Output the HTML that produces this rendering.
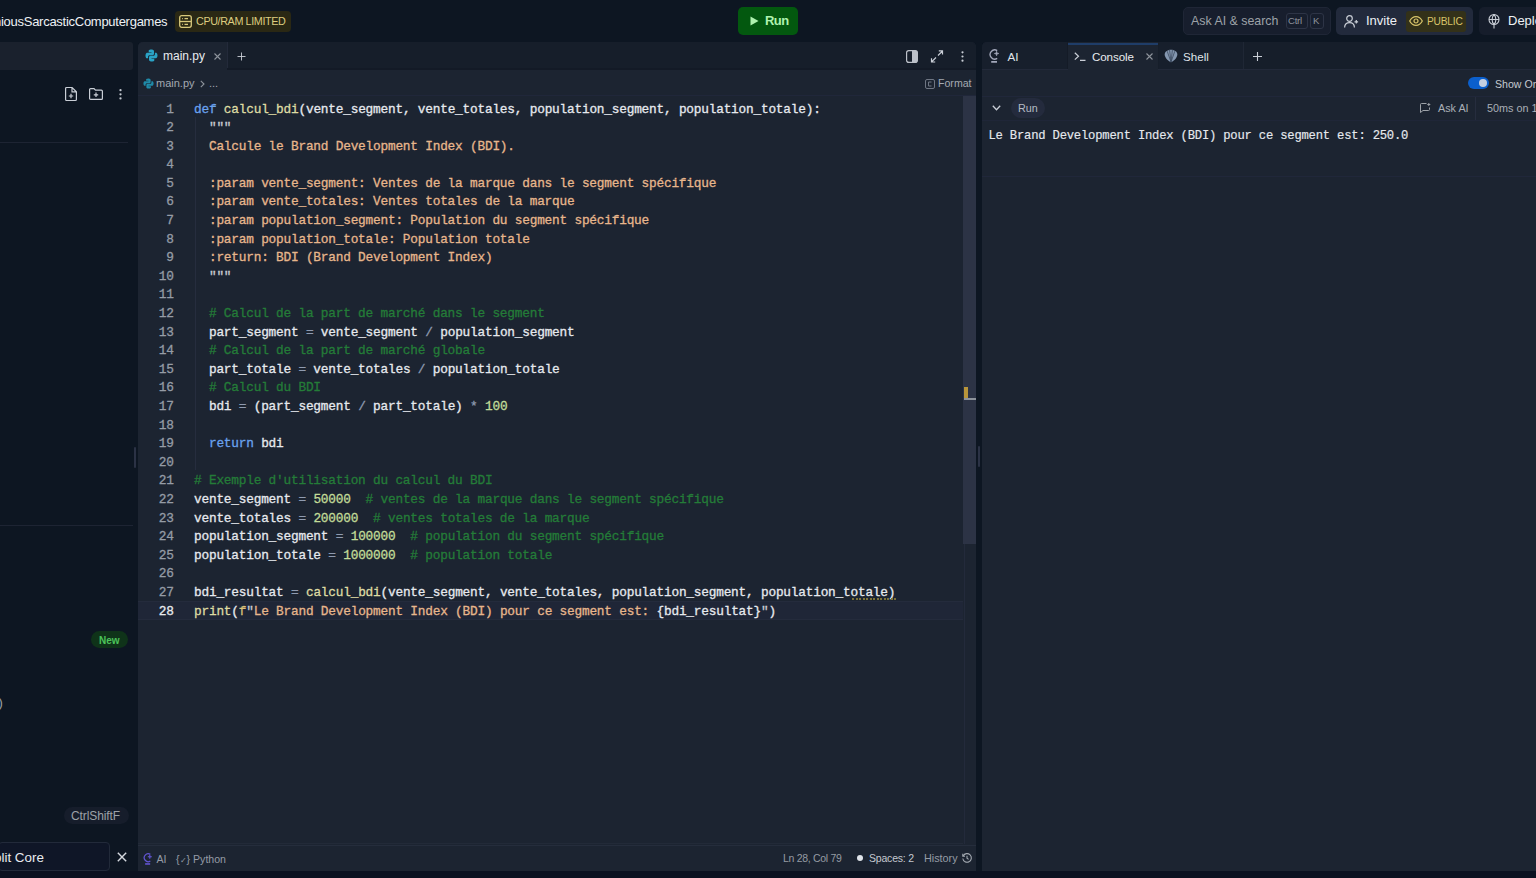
<!DOCTYPE html>
<html><head><meta charset="utf-8">
<style>
*{box-sizing:border-box;margin:0;padding:0}
html,body{width:1536px;height:878px;overflow:hidden;background:#0d1622;font-family:"Liberation Sans",sans-serif;color:#f5f9fc;position:relative}
.a{position:absolute;white-space:pre}
.mono{font-family:"Liberation Mono",monospace}
svg{position:absolute;overflow:visible}
/* top bar */
#title{left:-6px;top:13.5px;font-size:13px;line-height:16px;color:#eef1f5;letter-spacing:-0.27px}
#cpu{left:175px;top:11px;width:116px;height:21px;background:#2a2814;border-radius:4px}
#run{left:738px;top:7px;width:60px;height:28px;background:#03580f;border-radius:5px}
#search{left:1183px;top:7px;width:148px;height:28px;background:#171e2d;border-radius:5px;border:1px solid #1f2636}
#invite{left:1336px;top:7px;width:137px;height:28px;background:#222a3c;border-radius:5px}
#public{left:1406px;top:11px;width:60px;height:21px;background:#333119;border-radius:3px}
#deploy{left:1479px;top:7px;width:80px;height:28px;background:#161d2b;border-radius:5px}
/* panels */
#editor{left:138px;top:42px;width:838px;height:829px;background:#1c2431;border-radius:5px 5px 0 0;overflow:hidden}
#right{left:982px;top:42px;width:560px;height:829px;background:#1c2431;border-radius:5px 0 0 0;overflow:hidden}
.code{font-size:12.8px;line-height:18.59px;letter-spacing:-0.22px;-webkit-text-stroke:0.3px currentColor}
.k{color:#6aa2ee}.f{color:#dedba3}.s{color:#e7b68c}.c{color:#247c38}.n{color:#c2dc98}.o{color:#8f9bb0}.q{color:#c9ccd2}
</style></head>
<body>
<!-- ============ TOP BAR ============ -->
<div id="title" class="a">niousSarcasticComputergames</div>
<div id="cpu" class="a">
  <svg style="left:4px;top:4px" width="13" height="13" viewBox="0 0 13 13" fill="none" stroke="#d8c97c" stroke-width="1.3"><rect x="0.7" y="0.7" width="11.6" height="11.6" rx="2"/><line x1="0.7" y1="6.5" x2="12.3" y2="6.5"/><line x1="3.2" y1="3.6" x2="4" y2="3.6"/><line x1="5.5" y1="3.6" x2="9" y2="3.6"/><line x1="3.2" y1="9.4" x2="4" y2="9.4"/><line x1="5.5" y1="9.4" x2="9" y2="9.4"/></svg>
  <div class="a" style="left:21px;top:4px;font-size:10.8px;line-height:13px;color:#ddcd80;letter-spacing:-0.4px">CPU/RAM LIMITED</div>
</div>
<div id="run" class="a">
  <svg style="left:12px;top:9px" width="9" height="10" viewBox="0 0 9 10"><path d="M0.5 0.5 L8.5 5 L0.5 9.5 Z" fill="#aef2ae"/></svg>
  <div class="a" style="left:27px;top:6px;font-size:13px;line-height:16px;color:#aef2ae;font-weight:bold;letter-spacing:-0.6px">Run</div>
</div>
<div id="search" class="a">
  <div class="a" style="left:7px;top:6px;font-size:12.4px;line-height:15px;color:#9da2a8">Ask AI &amp; search</div>
  <div class="a" style="left:102px;top:5px;width:22px;height:16px;border:1px solid #2d3446;border-radius:3px"></div>
  <div class="a" style="left:104px;top:7px;font-size:9.6px;line-height:12px;color:#8d939b;letter-spacing:-0.3px">Ctrl</div>
  <div class="a" style="left:126px;top:5px;width:14px;height:16px;border:1px solid #2d3446;border-radius:3px"></div>
  <div class="a" style="left:129px;top:7px;font-size:9.6px;line-height:12px;color:#8d939b">K</div>
</div>
<div id="invite" class="a">
  <svg style="left:8px;top:8px" width="15" height="13" viewBox="0 0 15 13" fill="none" stroke="#c9ced6" stroke-width="1.2"><circle cx="5.5" cy="3.5" r="2.8"/><path d="M0.6 12.5 C0.6 9 2.8 7.6 5.5 7.6 C8.2 7.6 10.4 9 10.4 12.5"/><path d="M12.3 5 v3.6 M10.5 6.8 h3.6"/></svg>
  <div class="a" style="left:30px;top:6px;font-size:13px;line-height:16px;color:#eef1f5">Invite</div>
</div>
<div id="public" class="a">
  <svg style="left:3px;top:5px" width="14" height="10" viewBox="0 0 14 10" fill="none" stroke="#d8c46a" stroke-width="1.2"><path d="M0.7 5 C2.5 1.5 4.8 0.6 7 0.6 C9.2 0.6 11.5 1.5 13.3 5 C11.5 8.5 9.2 9.4 7 9.4 C4.8 9.4 2.5 8.5 0.7 5 Z"/><circle cx="7" cy="5" r="2"/></svg>
  <div class="a" style="left:21px;top:4px;font-size:10.2px;line-height:13px;color:#d8c46a;letter-spacing:-0.2px">PUBLIC</div>
</div>
<div id="deploy" class="a">
  <svg style="left:9px;top:7px" width="12" height="15" viewBox="0 0 12 15" fill="none" stroke="#c9ced6" stroke-width="1.1"><circle cx="6" cy="5.5" r="5"/><path d="M1 5.5 h10 M6 0.5 C3.5 3 3.5 8 6 10.5 C8.5 8 8.5 3 6 0.5 M6 10.5 V14.5"/></svg>
  <div class="a" style="left:29px;top:6px;font-size:13px;line-height:16px;color:#eef1f5">Deploy</div>
</div>

<!-- ============ LEFT SIDEBAR ============ -->
<div class="a" style="left:0;top:42px;width:133px;height:28px;background:#1a212d;border-radius:0 3px 3px 0"></div>
<svg style="left:65px;top:87px" width="12" height="14" viewBox="0 0 12 14" fill="none" stroke="#c9ced6" stroke-width="1.2"><path d="M0.6 1.5 a1 1 0 0 1 1-1 h5.5 l4.3 4.3 v7.7 a1 1 0 0 1 -1 1 h-8.8 a1 1 0 0 1 -1-1 z M7 0.6 v4.2 h4.3 M6 6.8 v4.4 M3.8 9 h4.4"/></svg>
<svg style="left:89px;top:88px" width="14" height="12" viewBox="0 0 14 12" fill="none" stroke="#c9ced6" stroke-width="1.2"><path d="M0.6 1.6 a1 1 0 0 1 1-1 h3.4 l1.5 1.6 h5.9 a1 1 0 0 1 1 1 v7.2 a1 1 0 0 1 -1 1 h-10.8 a1 1 0 0 1 -1-1 z M7 4.6 v4.4 M4.8 6.8 h4.4"/></svg>
<svg style="left:119px;top:89px" width="3" height="11" viewBox="0 0 3 11" fill="#c2c7cf"><circle cx="1.5" cy="1.2" r="1.15"/><circle cx="1.5" cy="5.3" r="1.15"/><circle cx="1.5" cy="9.4" r="1.15"/></svg>
<div class="a" style="left:0;top:142px;width:128px;height:1px;background:#1d2433"></div>
<div class="a" style="left:0;top:525px;width:133px;height:1px;background:#1d2433"></div>
<div class="a" style="left:134px;top:447px;width:2px;height:21px;background:#2b3245;border-radius:1px"></div>
<div class="a" style="left:91px;top:631px;width:37px;height:17px;background:#0f3319;border-radius:9px"></div>
<div class="a" style="left:99px;top:634px;font-size:10px;line-height:13px;color:#4cc35a;font-weight:bold">New</div>
<div class="a" style="left:-1.5px;top:695px;font-size:13px;line-height:15px;color:#9da2a8">)</div>
<div class="a" style="left:64px;top:807px;width:65px;height:17px;background:#161d2b;border-radius:9px"></div>
<div class="a" style="left:71px;top:809.5px;font-size:12px;line-height:13px;color:#9da2a8;letter-spacing:-0.1px">CtrlShiftF</div>
<div class="a" style="left:-2px;top:842px;width:112px;height:29px;border:1px solid #222a3a;border-radius:4px;background:#0f1627"></div>
<div class="a" style="left:-6px;top:850px;font-size:13.4px;line-height:15px;color:#e8ebef;letter-spacing:0px">plit Core</div>
<svg style="left:117px;top:852px" width="10" height="10" viewBox="0 0 10 10" stroke="#d5d9df" stroke-width="1.4"><path d="M0.8 0.8 L9.2 9.2 M9.2 0.8 L0.8 9.2"/></svg>

<!-- ============ EDITOR ============ -->
<div id="editor" class="a">
  <!-- tab bar -->
  <div class="a" style="left:0;top:0;width:838px;height:28px;background:#161e2a"></div>
  <div class="a" style="left:0;top:0;width:89px;height:28px;background:#1c2431"></div>
  <div class="a" style="left:89px;top:0;width:1px;height:28px;background:#232a3a"></div>
  <div class="a" style="left:89px;top:26px;width:749px;height:2px;background:#131a26"></div>
  <svg style="left:7px;top:7px" width="13" height="13" viewBox="0 0 13 13"><path d="M6.4 0.5 C3.5 0.5 3.7 1.8 3.7 1.8 v1.4 h2.8 v0.5 H2.3 C2.3 3.7 0.5 3.5 0.5 6.4 c0 2.9 1.6 2.8 1.6 2.8 h1 V7.8 c0 0 -0.1-1.6 1.6-1.6 h2.8 c0 0 1.5 0 1.5-1.5 V2.2 c0 0 0.2-1.7-3.1-1.7 z" fill="#2aa3c6"/><path d="M6.6 12.5 c2.9 0 2.7-1.3 2.7-1.3 V9.8 H6.5 V9.3 h4.2 c0 0 1.8 0.2 1.8-2.7 c0-2.9-1.6-2.8-1.6-2.8 h-1 v1.4 c0 0 0.1 1.6-1.6 1.6 H5.5 c0 0-1.5 0-1.5 1.5 v2.5 c0 0-0.2 1.7 3.1 1.7 z" fill="#2aa3c6"/></svg>
  <div class="a" style="left:25px;top:7px;font-size:12px;line-height:15px;color:#e8ebef">main.py</div>
  <svg style="left:76px;top:11px" width="7" height="7" viewBox="0 0 7 7" stroke="#8d939b" stroke-width="1.1"><path d="M0.5 0.5 L6.5 6.5 M6.5 0.5 L0.5 6.5"/></svg>
  <svg style="left:99px;top:10px" width="9" height="9" viewBox="0 0 9 9" stroke="#c9ced6" stroke-width="0.9"><path d="M4.5 0.5 V8.5 M0.5 4.5 H8.5"/></svg>
  <!-- toolbar icons -->
  <svg style="left:768px;top:8px" width="12" height="13" viewBox="0 0 12 13"><rect x="0.6" y="0.6" width="10.8" height="11.8" rx="2.2" fill="none" stroke="#bcc1c9" stroke-width="1.2"/><path d="M6 0.6 h3.2 a2.2 2.2 0 0 1 2.2 2.2 v7.4 a2.2 2.2 0 0 1 -2.2 2.2 H6 z" fill="#bcc1c9"/></svg>
  <svg style="left:793px;top:8px" width="12" height="13" viewBox="0 0 12 13" fill="none" stroke="#c9ced6" stroke-width="1.2"><path d="M7 5.5 L11.4 1.1 M7.8 0.9 h3.7 v3.7 M5 7.5 L0.6 11.9 M0.5 8.3 v3.7 h3.7"/></svg>
  <svg style="left:823px;top:9px" width="3" height="11" viewBox="0 0 3 11" fill="#c9ced6"><circle cx="1.5" cy="1.3" r="1.1"/><circle cx="1.5" cy="5.5" r="1.1"/><circle cx="1.5" cy="9.7" r="1.1"/></svg>
  <!-- breadcrumb -->
  <svg style="left:5px;top:36px" width="11" height="11" viewBox="0 0 13 13"><path d="M6.4 0.5 C3.5 0.5 3.7 1.8 3.7 1.8 v1.4 h2.8 v0.5 H2.3 C2.3 3.7 0.5 3.5 0.5 6.4 c0 2.9 1.6 2.8 1.6 2.8 h1 V7.8 c0 0 -0.1-1.6 1.6-1.6 h2.8 c0 0 1.5 0 1.5-1.5 V2.2 c0 0 0.2-1.7-3.1-1.7 z" fill="#1f8aa8"/><path d="M6.6 12.5 c2.9 0 2.7-1.3 2.7-1.3 V9.8 H6.5 V9.3 h4.2 c0 0 1.8 0.2 1.8-2.7 c0-2.9-1.6-2.8-1.6-2.8 h-1 v1.4 c0 0 0.1 1.6-1.6 1.6 H5.5 c0 0-1.5 0-1.5 1.5 v2.5 c0 0-0.2 1.7 3.1 1.7 z" fill="#1f8aa8"/></svg>
  <div class="a" style="left:18px;top:35px;font-size:11px;line-height:13px;color:#a3a9b1">main.py</div>
  <svg style="left:62px;top:38px" width="5" height="8" viewBox="0 0 5 8" fill="none" stroke="#8d939b" stroke-width="1.1"><path d="M0.8 0.8 L4 4 L0.8 7.2"/></svg>
  <div class="a" style="left:71px;top:35px;font-size:11px;line-height:13px;color:#a3a9b1">...</div>
  <svg style="left:787px;top:37px" width="10" height="10" viewBox="0 0 10 10" fill="none" stroke="#6f7683" stroke-width="1"><rect x="0.5" y="0.5" width="9" height="9" rx="1.5"/><path d="M6.5 3 H3.5 V7 H6.5"/></svg>
  <div class="a" style="left:800px;top:35px;font-size:10.6px;line-height:13px;color:#a3a9b1">Format</div>
  <div class="a" style="left:0;top:53px;width:838px;height:1px;background:#20273a"></div>
  <!-- scrollbar -->
  <div class="a" style="left:825px;top:54px;width:13px;height:448px;background:#2c3345"></div>
  <div class="a" style="left:826px;top:502px;width:1px;height:300px;background:#232a3b"></div>
  <div class="a" style="left:826px;top:345px;width:4px;height:12px;background:#b8953a"></div>
  <div class="a" style="left:826px;top:356px;width:12px;height:1.5px;background:#8d939b"></div>
  <!-- indent guides -->
  <div class="a" style="left:57px;top:75px;width:1px;height:353px;background:#262d3e"></div>
  <!-- current line -->
  <div class="a" style="left:0;top:559px;width:825px;height:19px;background:#1f2637;border-top:1px solid #242b3c;border-bottom:1px solid #242b3c"></div>
  <!-- line numbers -->
  <div class="a mono code" style="left:0;top:58.5px;width:35.7px;text-align:right;color:#959ca6">1
2
3
4
5
6
7
8
9
10
11
12
13
14
15
16
17
18
19
20
21
22
23
24
25
26
27
<span style="color:#e8ebef">28</span></div>
  <!-- code -->
  <div class="a mono code" style="left:56px;top:58.5px;color:#e6e9ee"><span class="k">def</span> <span class="f">calcul_bdi</span>(vente_segment, vente_totales, population_segment, population_totale):
  <span class="q">"""</span>
<span class="s">  Calcule le Brand Development Index (BDI).</span>

<span class="s">  :param vente_segment: Ventes de la marque dans le segment spécifique</span>
<span class="s">  :param vente_totales: Ventes totales de la marque</span>
<span class="s">  :param population_segment: Population du segment spécifique</span>
<span class="s">  :param population_totale: Population totale</span>
<span class="s">  :return: BDI (Brand Development Index)</span>
  <span class="q">"""</span>

  <span class="c"># Calcul de la part de marché dans le segment</span>
  part_segment <span class="o">=</span> vente_segment <span class="o">/</span> population_segment
  <span class="c"># Calcul de la part de marché globale</span>
  part_totale <span class="o">=</span> vente_totales <span class="o">/</span> population_totale
  <span class="c"># Calcul du BDI</span>
  bdi <span class="o">=</span> (part_segment <span class="o">/</span> part_totale) <span class="o">*</span> <span class="n">100</span>

  <span class="k">return</span> bdi

<span class="c"># Exemple d'utilisation du calcul du BDI</span>
vente_segment <span class="o">=</span> <span class="n">50000</span>  <span class="c"># ventes de la marque dans le segment spécifique</span>
vente_totales <span class="o">=</span> <span class="n">200000</span>  <span class="c"># ventes totales de la marque</span>
population_segment <span class="o">=</span> <span class="n">100000</span>  <span class="c"># population du segment spécifique</span>
population_totale <span class="o">=</span> <span class="n">1000000</span>  <span class="c"># population totale</span>

bdi_resultat <span class="o">=</span> <span class="f">calcul_bdi</span>(vente_segment, vente_totales, population_segment, population_totale)
<span class="f">print</span>(<span style="color:#dcc27a">f</span><span class="q">"</span><span class="s">Le Brand Development Index (BDI) pour ce segment est: </span>{bdi_resultat}<span class="q">"</span>)</div>
  <div class="a" style="left:714px;top:556px;width:45px;height:2px;background:repeating-linear-gradient(90deg,#7d7238 0 2px,transparent 2px 3.5px)"></div>
  <!-- status bar -->
  <div class="a" style="left:0;top:801px;width:825px;height:1px;background:#222a38"></div><div class="a" style="left:0;top:803px;width:838px;height:1px;background:#252d3c"></div>
  <svg style="left:5px;top:810px" width="10" height="13" viewBox="0 0 11 15" fill="none" stroke="#6456d6" stroke-width="1.4"><path d="M8.2 2.6 A4.6 4.6 0 1 0 8.2 10.4"/><path d="M7.6 3.2 L8.1 5 L9.9 5.5 L8.1 6 L7.6 7.8 L7.1 6 L5.3 5.5 L7.1 5 Z" fill="#6456d6" stroke-width="0.6"/><path d="M2.2 13.8 h5.8" stroke-width="1.8"/></svg>
  <div class="a" style="left:18.5px;top:810.5px;font-size:10.6px;line-height:13px;color:#959ca6">AI</div>
  <div class="a" style="left:38px;top:810.5px;font-size:10.6px;line-height:13px;color:#959ca6">{<span style="font-size:8px">✓</span>} Python</div>
  <div class="a" style="left:645px;top:810px;font-size:10.5px;line-height:13px;color:#959ba3;letter-spacing:-0.3px">Ln 28, Col 79</div>
  <div class="a" style="left:719px;top:813px;width:6px;height:6px;border-radius:3px;background:#e0e4ea"></div>
  <div class="a" style="left:731px;top:810px;font-size:10.5px;line-height:13px;color:#c4c9d0;letter-spacing:-0.2px">Spaces: 2</div>
  <div class="a" style="left:786px;top:810px;font-size:10.8px;line-height:13px;color:#959ca6">History</div>
  <svg style="left:824px;top:811px" width="10" height="10" viewBox="0 0 10 10" fill="none" stroke="#a3a9b1" stroke-width="1.1"><path d="M1.2 3 A4.3 4.3 0 1 1 0.8 5.5"/><path d="M0.8 0.8 V3.2 H3"/><path d="M5 2.8 V5.2 L6.6 6.4"/></svg>
</div>

<!-- splitter right -->
<div class="a" style="left:978px;top:446px;width:2px;height:21px;background:#2b3245;border-radius:1px"></div>

<!-- ============ RIGHT PANEL ============ -->
<div id="right" class="a">
  <div class="a" style="left:0;top:0;width:560px;height:28px;background:#161e2a"></div>
  <div class="a" style="left:0;top:0;width:85px;height:27px;background:#171f2c"></div>
  <div class="a" style="left:85px;top:0;width:1px;height:28px;background:#141b27"></div>
  <div class="a" style="left:86px;top:0;width:90px;height:28px;background:#1c2431"></div>
  <div class="a" style="left:86px;top:1px;width:90px;height:2px;background:#1f3d68"></div>
  <div class="a" style="left:177px;top:0;width:84px;height:27px;background:#171f2c"></div>
  <div class="a" style="left:261px;top:0;width:1px;height:28px;background:#1f2735"></div>
  <div class="a" style="left:0;top:27px;width:86px;height:1px;background:#222939"></div>
  <div class="a" style="left:176px;top:27px;width:384px;height:1px;background:#222939"></div>
  <!-- AI -->
  <svg style="left:7px;top:6px" width="11" height="15" viewBox="0 0 11 15" fill="none" stroke="#a3a8bb" stroke-width="1.3"><path d="M8.2 2.6 A4.6 4.6 0 1 0 8.2 10.4"/><path d="M7.6 3.2 L8.1 5 L9.9 5.5 L8.1 6 L7.6 7.8 L7.1 6 L5.3 5.5 L7.1 5 Z" fill="#a3a8bb" stroke-width="0.6"/><path d="M2.2 13.8 h5.8" stroke-width="1.8"/></svg>
  <div class="a" style="left:25.5px;top:8px;font-size:11.6px;line-height:14px;color:#dfe3e9">AI</div>
  <!-- Console -->
  <svg style="left:92px;top:10px" width="12" height="9" viewBox="0 0 12 9" fill="none" stroke="#c9ced6" stroke-width="1.2"><path d="M0.8 0.8 L4.5 4.2 L0.8 7.6 M6 8.3 H11.5"/></svg>
  <div class="a" style="left:110px;top:8px;font-size:11.6px;line-height:14px;color:#e8ebef;letter-spacing:-0.1px">Console</div>
  <svg style="left:164px;top:11px" width="7" height="7" viewBox="0 0 7 7" stroke="#8d939b" stroke-width="1.1"><path d="M0.5 0.5 L6.5 6.5 M6.5 0.5 L0.5 6.5"/></svg>
  <!-- Shell -->
  <svg style="left:182px;top:7px" width="14" height="14" viewBox="0 0 14 14"><path d="M7 13.3 C5 12.5 1.2 9.5 0.7 6 C0.3 3 3.2 0.7 7 0.7 C10.8 0.7 13.7 3 13.3 6 C12.8 9.5 9 12.5 7 13.3 Z" fill="#8497b0"/><path d="M7 13 L3.2 2.2 M7 13 L5.6 1 M7 13 L8.4 1 M7 13 L10.8 2.2" stroke="#3b4a60" stroke-width="0.8" fill="none"/></svg>
  <div class="a" style="left:201px;top:8px;font-size:11.6px;line-height:14px;color:#dfe3e9">Shell</div>
  <svg style="left:271px;top:10px" width="9" height="9" viewBox="0 0 9 9" stroke="#c9ced6" stroke-width="1.1"><path d="M4.5 0 V9 M0 4.5 H9"/></svg>
  <!-- show only latest row -->
  <div class="a" style="left:0;top:28px;width:560px;height:26px;background:#1c2431"></div>
  <div class="a" style="left:486px;top:35px;width:21px;height:12px;border-radius:6px;background:#0b5fcc"></div>
  <div class="a" style="left:497px;top:37px;width:8px;height:8px;border-radius:4px;background:#c5cfe0"></div>
  <div class="a" style="left:513px;top:35.8px;font-size:10.6px;line-height:13px;color:#c4c9d0">Show Only Latest</div>
  <div class="a" style="left:0;top:54px;width:560px;height:1px;background:#20273a"></div>
  <!-- run row -->
  <svg style="left:10px;top:63px" width="9" height="6" viewBox="0 0 9 6" fill="none" stroke="#c9ced6" stroke-width="1.3"><path d="M0.8 0.8 L4.5 4.8 L8.2 0.8"/></svg>
  <div class="a" style="left:29px;top:56px;width:34px;height:20px;border-radius:10px;background:#242b3d"></div>
  <div class="a" style="left:36px;top:60px;font-size:10.8px;line-height:13px;color:#b5bbc4">Run</div>
  <svg style="left:438px;top:61px" width="11" height="10" viewBox="0 0 11 10" fill="none" stroke="#9da2a8" stroke-width="1"><path d="M0.5 9.5 V1.5 a1 1 0 0 1 1-1 h5 M9.5 4.5 v2 a1 1 0 0 1 -1 1 h-5.5 l-2.5 2"/><path d="M8.8 0 v3 M7.3 1.5 h3"/></svg>
  <div class="a" style="left:456px;top:60px;font-size:10.8px;line-height:13px;color:#a9afb7">Ask AI</div>
  <div class="a" style="left:493px;top:55px;width:1px;height:24px;background:#262d3e"></div>
  <div class="a" style="left:505px;top:60px;font-size:10.8px;line-height:13px;color:#a9afb7">50ms on 1</div>
  <div class="a" style="left:0;top:78px;width:560px;height:1px;background:#1f2638"></div>
  <!-- output -->
  <div class="a mono" style="left:6.5px;top:86.7px;font-size:12.2px;letter-spacing:-0.2px;line-height:14px;color:#e6e9ee;-webkit-text-stroke:0.15px currentColor">Le Brand Development Index (BDI) pour ce segment est: 250.0</div>
  <div class="a" style="left:0;top:134px;width:560px;height:1px;background:#20273a"></div>
</div>
<!-- bottom strip -->
<div class="a" style="left:0;top:871px;width:1536px;height:7px;background:#0b1120"></div>
</body></html>
